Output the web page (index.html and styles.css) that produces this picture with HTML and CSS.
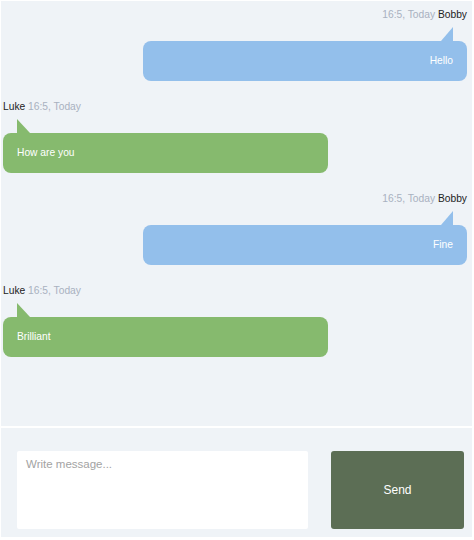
FILE: index.html
```html
<!DOCTYPE html>
<html>
<head>
<meta charset="utf-8">
<link rel="stylesheet" href="styles.css">
</head>
<body>
<div class="app">
  <div class="chat">
    <div class="msg msg-out">
      <div class="meta"><span class="time">16:5, Today</span> <span class="name">Bobby</span></div>
      <div class="bubble bubble-out">Hello</div>
    </div>
    <div class="msg msg-in">
      <div class="meta"><span class="name">Luke</span> <span class="time">16:5, Today</span></div>
      <div class="bubble bubble-in">How are you</div>
    </div>
    <div class="msg msg-out">
      <div class="meta"><span class="time">16:5, Today</span> <span class="name">Bobby</span></div>
      <div class="bubble bubble-out">Fine</div>
    </div>
    <div class="msg msg-in">
      <div class="meta"><span class="name">Luke</span> <span class="time">16:5, Today</span></div>
      <div class="bubble bubble-in">Brilliant</div>
    </div>
  </div>
  <div class="composer">
    <textarea class="input" placeholder="Write message..."></textarea>
    <button class="send">Send</button>
  </div>
</div>
</body>
</html>
```

FILE: styles.css
```css
html, body {
  margin: 0;
  padding: 0;
  background: #ffffff;
}

body {
  font-family: "Liberation Sans", Arial, sans-serif;
}

.app {
  margin: 1px 2px 3px 1px;
  height: 536px;
  display: flex;
  flex-direction: column;
  gap: 2px;
}

.chat {
  height: 425px;
  flex: none;
  background: #eff3f7;
  padding: 8px 5px 0 2px;
  box-sizing: border-box;
  display: flex;
  flex-direction: column;
}

.msg {
  display: flex;
  flex-direction: column;
  margin-bottom: 20px;
}

.msg-out {
  align-items: flex-end;
}

.msg-in {
  align-items: flex-start;
}

.meta {
  font-size: 10.25px;
  line-height: 12px;
  height: 12px;
  white-space: nowrap;
}

.time {
  color: #a9b1c0;
}

.name {
  color: #222222;
}

.bubble {
  position: relative;
  margin-top: 20px;
  width: 70%;
  box-sizing: border-box;
  height: 40px;
  padding: 14px 14px;
  border-radius: 8px;
  font-size: 10.25px;
  line-height: 12px;
  color: #ffffff;
}

.bubble::before {
  content: "";
  position: absolute;
  top: -14px;
  width: 0;
  height: 0;
}

.bubble-out {
  background: #93bfeb;
  text-align: right;
  width: 324px;
}

.bubble-out::before {
  right: 14px;
  border-bottom: 14px solid #93bfeb;
  border-left: 12px solid transparent;
}

.bubble-in {
  background: #86ba6e;
  text-align: left;
  width: 325px;
}

.bubble-in::before {
  left: 14px;
  border-bottom: 14px solid #86ba6e;
  border-right: 13px solid transparent;
}

.composer {
  flex: 1;
  background: #eff3f7;
  padding: 23px 8px 8px 16px;
  box-sizing: border-box;
  display: flex;
  gap: 23px;
}

.input {
  width: 291px;
  flex: none;
  box-sizing: border-box;
  height: 78px;
  border: none;
  border-radius: 2px;
  background: #ffffff;
  padding: 6px 9px;
  margin: 0;
  resize: none;
  font-family: "Liberation Sans", Arial, sans-serif;
  font-size: 11.5px;
  line-height: 14px;
  color: #333333;
  outline: none;
}

.input::placeholder {
  color: #a3a3a3;
}

.send {
  flex: 1;
  height: 78px;
  margin: 0;
  border: none;
  border-radius: 3px;
  background: #5c6e55;
  color: #ffffff;
  font-family: "Liberation Sans", Arial, sans-serif;
  font-size: 12px;
  padding: 0;
}
```
